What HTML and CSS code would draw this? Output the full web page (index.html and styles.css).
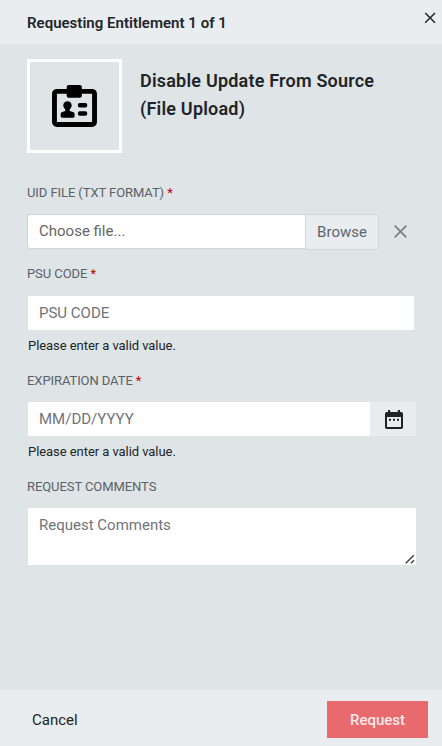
FILE: index.html
```html
<!DOCTYPE html>
<html lang="en">
<head>
    <meta charset="UTF-8">
    <meta name="viewport" content="width=device-width, initial-scale=1.0">
    <title>Requesting Entitlement</title>
    <link rel="stylesheet" href="styles.css">
</head>
<body>
    <div class="panel">
        <header class="panel-header">
            <h1>Requesting Entitlement 1 of 1</h1>
            <button class="close" type="button" aria-label="Close">
                <svg width="12" height="12" viewBox="0 0 12 12"><path d="M1.200 1l9.800 9.800M11 1L1.200 10.800" stroke="#212529" stroke-width="1.5"/></svg>
            </button>
        </header>

        <form class="panel-body">
            <div class="entitlement">
                <div class="entitlement-icon">
                    <svg width="45" height="42" viewBox="0 0 46 43">
                        <rect x="2.5" y="6.5" width="41" height="34" rx="2.5" fill="none" stroke="#000" stroke-width="5"/>
                        <rect x="15" y="0" width="15.500" height="13" rx="2"/>
                        <circle cx="15.800" cy="21" r="4.300"/>
                        <path d="M13.500 23h4.600v3.500l4 1.500q1 .5 1 2v2q0 1.500-1.500 1.500H10.300q-1.500 0-1.500-1.500v-2q0-1.500 1-2l3.700-1.500z"/>
                        <rect x="26.500" y="18.500" width="9.500" height="4.500" rx="1.800"/>
                        <rect x="26.500" y="27" width="9.500" height="4.500" rx="1.800"/>
                    </svg>
                </div>
                <h2>Disable Update From Source (File Upload)</h2>
            </div>

            <div class="field field-file">
                <label for="uidFile">UID FILE (TXT FORMAT) <span class="required">*</span></label>
                <div class="file-row">
                    <span class="file-name">Choose file...</span>
                    <button class="browse" id="uidFile" type="button">Browse</button>
                    <button class="clear" type="button" aria-label="Clear">
                        <svg width="13" height="13" viewBox="0 0 13 13"><path d="M.7.700l11.600 11.600M12.300.700L.7 12.300" stroke="#7a7f83" stroke-width="1.700"/></svg>
                    </button>
                </div>
            </div>

            <div class="field field-psu">
                <label for="psuCode">PSU CODE <span class="required">*</span></label>
                <input class="control" type="text" id="psuCode" placeholder="PSU CODE">
                <p class="hint">Please enter a valid value.</p>
            </div>

            <div class="field">
                <label for="expiration">EXPIRATION DATE <span class="required">*</span></label>
                <div class="date-row">
                    <input class="control" type="text" id="expiration" placeholder="MM/DD/YYYY">
                    <button class="calendar" type="button" aria-label="Open calendar">
                        <svg width="18" height="19" viewBox="0 0 18 19">
                            <path fill="#212121" fill-rule="evenodd" d="M3 0h2.200v2h7.600V0H15v2h1.200Q18 2 18 3.800v13.400q0 1.800-1.800 1.800H1.800Q0 19 0 17.200V3.800Q0 2 1.800 2H3zM2 7v10h14V7z"/>
                            <path fill="#212121" d="M4 8.800h2v2H4zM8 8.800h2v2H8zM12 8.800h2v2h-2z"/>
                        </svg>
                    </button>
                </div>
                <p class="hint">Please enter a valid value.</p>
            </div>

            <div class="field">
                <label for="comments">REQUEST COMMENTS</label>
                <div class="comments-box">
                    <textarea class="control comments" id="comments" placeholder="Request Comments"></textarea>
                    <svg class="grip" width="10" height="10" viewBox="0 0 10 10"><path d="M.8 9.200l8-8M6 9.200l3-3" stroke="#444" stroke-width="1.500"/></svg>
                </div>
            </div>
        </form>

        <footer class="panel-footer">
            <button class="cancel" type="button">Cancel</button>
            <button class="request" type="button">Request</button>
        </footer>
    </div>
</body>
</html>
```
FILE: styles.css
```css
* {
    box-sizing: border-box;
}
body {
    margin: 0;
    font-family: Roboto, "Liberation Sans", sans-serif;
    font-size: 15px;
    color: #212529;
}
button, input, textarea {
    font: inherit;
    border: none;
    border-radius: 0;
    padding: 0;
    margin: 0;
    background: none;
}
svg {
    display: block;
}
.panel {
    display: flex;
    flex-direction: column;
    height: 746px;
    background: #dfe4e7;
}
.panel-header {
    display: flex;
    justify-content: space-between;
    height: 44px;
    padding: 12px 6px 0 27px;
    background: #e9edf0;
}
h1 {
    margin: 0;
    font-size: 15px;
    font-weight: 600;
    line-height: 22px;
    letter-spacing: 0.02px;
}
.close {
    width: 12px;
    height: 12px;
}
.panel-body {
    flex: 1;
    padding: 15px 26px 0 27px;
}
.entitlement {
    display: flex;
    gap: 18px;
    margin-bottom: 30px;
}
.entitlement-icon {
    display: flex;
    flex: none;
    align-items: center;
    justify-content: center;
    width: 95px;
    height: 94px;
    border: 3px solid #fff;
}
h2 {
    width: 250px;
    margin: 8px 0 0;
    font-size: 18px;
    font-weight: 600;
    line-height: 28px;
    letter-spacing: 0.2px;
}
.field {
    margin-bottom: 15px;
}
.field-file {
    margin-bottom: 14px;
}
label {
    display: block;
    margin-bottom: 11px;
    font-size: 13px;
    line-height: 20px;
    letter-spacing: -0.08px;
    color: #5b6166;
}
.field-psu label {
    margin-bottom: 12px;
}
.required {
    color: #c00000;
}
.file-row {
    display: flex;
    align-items: flex-start;
    height: 36px;
}
.file-name {
    width: 278px;
    height: 35px;
    padding: 0 11px;
    border: 1px solid #ced8da;
    border-right: none;
    border-radius: 3px 0 0 3px;
    background: #fff;
    line-height: 32px;
    color: #666;
}
.browse {
    width: 74px;
    height: 36px;
    border: 1px solid #ced8da;
    border-radius: 0 3px 3px 0;
    background: #e9edf0;
    color: #5b656c;
}
.clear {
    margin: 11px 0 0 15px;
}
.control {
    display: block;
    width: 386px;
    height: 34px;
    margin-left: 1px;
    padding: 0 11px;
    background: #fff;
    color: #212529;
}
.control::placeholder {
    color: #6f7479;
    opacity: 1;
}
.hint {
    margin: 6px 0 0 1px;
    font-size: 13px;
    line-height: 20px;
    letter-spacing: -0.06px;
}
.date-row {
    display: flex;
}
.date-row .control {
    width: 342px;
}
.calendar {
    display: flex;
    align-items: center;
    justify-content: center;
    width: 46px;
    height: 34px;
    padding-left: 2px;
    background: #e9ecef;
}
.comments-box {
    position: relative;
    width: 389px;
}
.comments {
    width: 388px;
    height: 57px;
    padding-top: 6px;
    line-height: 22px;
    resize: none;
}
.grip {
    position: absolute;
    right: 1px;
    bottom: 1px;
}
.panel-footer {
    display: flex;
    align-items: center;
    justify-content: space-between;
    height: 56px;
    padding: 3px 14px 0 32px;
    background: #e9edf0;
}
.cancel {
    color: #212529;
}
.request {
    width: 101px;
    height: 37px;
    background: #e96a6e;
    color: #fbe9ea;
    font-weight: 500;
}
```
